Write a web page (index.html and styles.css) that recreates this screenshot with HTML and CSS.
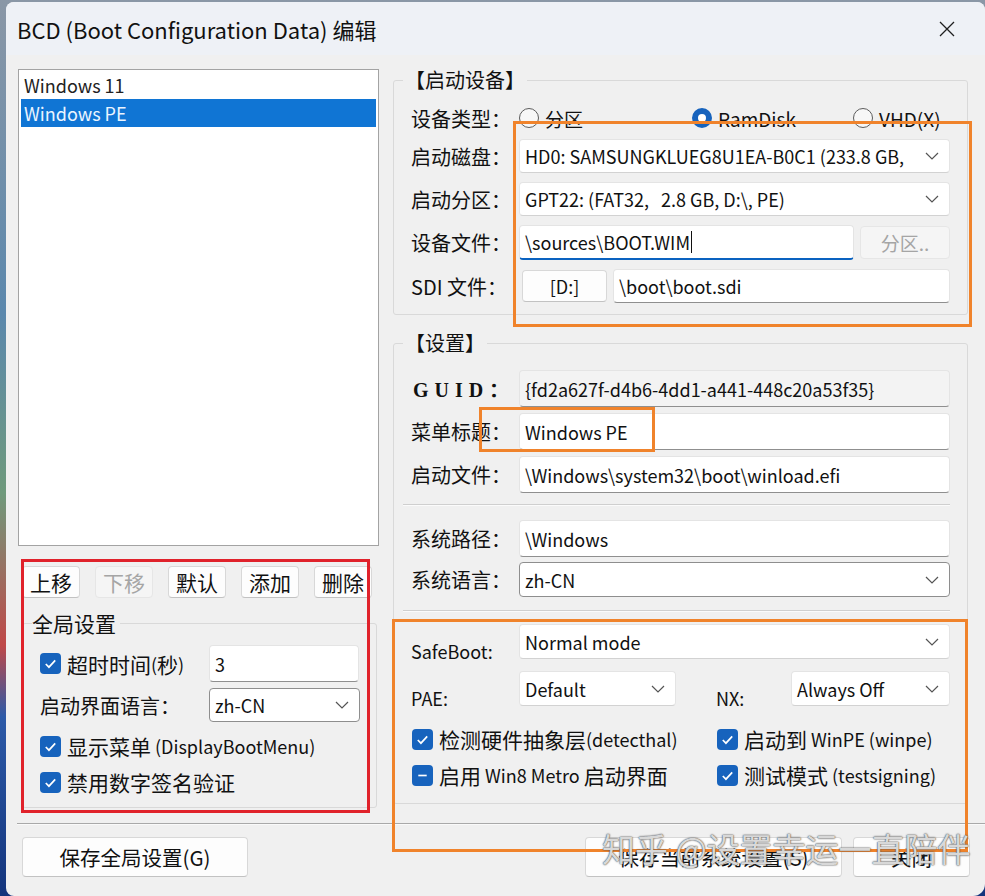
FILE: index.html
```html
<!DOCTYPE html>
<html lang="zh-CN">
<head>
    <meta charset="UTF-8">
    <title>BCD (Boot Configuration Data) 编辑</title>
    <link rel="stylesheet" href="styles.css">
</head>
<body>
    <div class="window">
        <div class="titlebar">
            <span class="title">BCD (Boot Configuration Data) 编辑</span>
            <svg class="close" width="16" height="16" viewBox="0 0 16 16"><path d="M1 1L15 15M15 1L1 15" stroke="#1f1f1f" stroke-width="1.3" fill="none"/></svg>
        </div>

        <div class="main">
            <div class="left">
                <div class="listbox">
                    <div class="list-item">Windows 11</div>
                    <div class="list-item selected">Windows PE</div>
                </div>

                <div class="toolbar">
                    <button class="btn">上移</button>
                    <button class="btn disabled">下移</button>
                    <button class="btn">默认</button>
                    <button class="btn">添加</button>
                    <button class="btn">删除</button>
                </div>

                <fieldset class="group global">
                    <legend>全局设置</legend>
                    <div class="global-grid">
                        <div class="check"><span class="cb"><svg viewBox="0 0 20 20"><path d="M5.5 10.5l3 3 6-6.5" fill="none" stroke="#fff" stroke-width="1.6"/></svg></span>超时时间<span class="latin">(</span>秒<span class="latin">)</span></div>
                        <div class="field tall">3</div>
                        <div class="lbl">启动界面语言：</div>
                        <div class="field combo edit">zh-CN<svg class="chev" width="14" height="8" viewBox="0 0 14 8"><path d="M1 1l6 6 6-6" fill="none" stroke="#555" stroke-width="1.2"/></svg></div>
                    </div>
                    <div class="check g-row"><span class="cb"><svg viewBox="0 0 20 20"><path d="M5.5 10.5l3 3 6-6.5" fill="none" stroke="#fff" stroke-width="1.6"/></svg></span>显示菜单<span class="latin">&nbsp;(DisplayBootMenu)</span></div>
                    <div class="check g-row"><span class="cb"><svg viewBox="0 0 20 20"><path d="M5.5 10.5l3 3 6-6.5" fill="none" stroke="#fff" stroke-width="1.6"/></svg></span>禁用数字签名验证</div>
                </fieldset>
            </div>

            <div class="right">
                <fieldset class="group device">
                    <legend>【启动设备】</legend>
                    <div class="row radios-row">
                        <span class="lbl">设备类型：</span>
                        <div class="radios">
                            <span class="radio"><span class="rb"></span>分区</span>
                            <span class="radio"><span class="rb on"></span>RamDisk</span>
                            <span class="radio"><span class="rb"></span>VHD(X)</span>
                        </div>
                    </div>
                    <div class="row">
                        <span class="lbl">启动磁盘：</span>
                        <div class="field combo">HD0: SAMSUNGKLUEG8U1EA-B0C1 (233.8 GB,<svg class="chev" width="14" height="8" viewBox="0 0 14 8"><path d="M1 1l6 6 6-6" fill="none" stroke="#555" stroke-width="1.2"/></svg></div>
                    </div>
                    <div class="row">
                        <span class="lbl">启动分区：</span>
                        <div class="field combo">GPT22: (FAT32,&nbsp;&nbsp; 2.8 GB, D:\, PE)<svg class="chev" width="14" height="8" viewBox="0 0 14 8"><path d="M1 1l6 6 6-6" fill="none" stroke="#555" stroke-width="1.2"/></svg></div>
                    </div>
                    <div class="row">
                        <span class="lbl">设备文件：</span>
                        <div class="field focus tall-35">\sources\BOOT.WIM<span class="caret"></span></div>
                        <button class="btn disabled part-btn">分区..</button>
                    </div>
                    <div class="row">
                        <span class="lbl">SDI 文件：</span>
                        <button class="btn drive-btn">[D:]</button>
                        <div class="field sdi">\boot\boot.sdi</div>
                    </div>
                </fieldset>

                <fieldset class="group settings">
                    <legend>【设置】</legend>
                    <div class="row">
                        <span class="lbl guid">GUID：</span>
                        <div class="field tall readonly">{fd2a627f-d4b6-4dd1-a441-448c20a53f35}</div>
                    </div>
                    <div class="row gap6">
                        <span class="lbl">菜单标题：</span>
                        <div class="field tall">Windows PE</div>
                    </div>
                    <div class="row gap6">
                        <span class="lbl">启动文件：</span>
                        <div class="field tall">\Windows\system32\boot\winload.efi</div>
                    </div>
                    <div class="divider d1"></div>
                    <div class="row gap14">
                        <span class="lbl">系统路径：</span>
                        <div class="field tall">\Windows</div>
                    </div>
                    <div class="row gap5">
                        <span class="lbl">系统语言：</span>
                        <div class="field combo edit tall-35">zh-CN<svg class="chev" width="14" height="8" viewBox="0 0 14 8"><path d="M1 1l6 6 6-6" fill="none" stroke="#555" stroke-width="1.2"/></svg></div>
                    </div>
                    <div class="divider d2"></div>
                    <div class="row gap12">
                        <span class="lbl small low">SafeBoot:</span>
                        <div class="field combo tall-35">Normal mode<svg class="chev" width="14" height="8" viewBox="0 0 14 8"><path d="M1 1l6 6 6-6" fill="none" stroke="#555" stroke-width="1.2"/></svg></div>
                    </div>
                    <div class="row gap12">
                        <span class="lbl small low">PAE:</span>
                        <div class="field combo tall-35 pae">Default<svg class="chev" width="14" height="8" viewBox="0 0 14 8"><path d="M1 1l6 6 6-6" fill="none" stroke="#555" stroke-width="1.2"/></svg></div>
                        <span class="lbl small low nx">NX:</span>
                        <div class="field combo tall-35">Always Off<svg class="chev" width="14" height="8" viewBox="0 0 14 8"><path d="M1 1l6 6 6-6" fill="none" stroke="#555" stroke-width="1.2"/></svg></div>
                    </div>
                    <div class="checks">
                        <div class="check"><span class="cb"><svg viewBox="0 0 20 20"><path d="M5.5 10.5l3 3 6-6.5" fill="none" stroke="#fff" stroke-width="1.6"/></svg></span>检测硬件抽象层<span class="latin">(detecthal)</span></div>
                        <div class="check"><span class="cb"><svg viewBox="0 0 20 20"><path d="M5.5 10.5l3 3 6-6.5" fill="none" stroke="#fff" stroke-width="1.6"/></svg></span>启动到<span class="latin">&nbsp;WinPE (winpe)</span></div>
                        <div class="check"><span class="cb"><svg viewBox="0 0 20 20"><path d="M6 10h8" fill="none" stroke="#fff" stroke-width="1.6"/></svg></span>启用<span class="latin">&nbsp;Win8 Metro&nbsp;</span>启动界面</div>
                        <div class="check"><span class="cb"><svg viewBox="0 0 20 20"><path d="M5.5 10.5l3 3 6-6.5" fill="none" stroke="#fff" stroke-width="1.6"/></svg></span>测试模式<span class="latin">&nbsp;(testsigning)</span></div>
                    </div>
                </fieldset>
            </div>
        </div>

        <div class="separator"></div>

        <div class="footer">
            <button class="btn save-global">保存全局设置(G)</button>
            <div class="footer-right">
                <button class="btn save-sys">保存当前系统设置(S)</button>
                <button class="btn close-btn">关闭</button>
            </div>
        </div>

        <div class="mark red-mark"></div>
        <div class="mark orange-mark o1"></div>
        <div class="mark orange-mark o2"></div>
        <div class="mark orange-mark o3"></div>
        <div class="watermark">知乎 @设置幸运一直陪伴</div>
    </div>
</body>
</html>
```

FILE: styles.css
```css
* {
    box-sizing: border-box;
}

body {
    margin: 0;
    width: 985px;
    height: 896px;
    overflow: hidden;
    background: linear-gradient(180deg, #8a97a6 0, #5b88ad 35%, #6f9a7c 55%, #c04848 72%, #2c5aa8 80%, #14347c 100%);
    font-family: "Noto Sans CJK SC", "Noto Sans", sans-serif;
    color: #111;
}

.window {
    position: relative;
    margin: 2px 0 0 6px;
    width: 979px;
    height: 894px;
    background: #f0f0f0;
    border-radius: 8px 8px 12px 8px;
    overflow: hidden;
}

.titlebar {
    height: 53px;
    background: #eef1f6;
    display: flex;
    align-items: center;
    justify-content: space-between;
    padding: 0 30px 0 11px;
}

.title {
    font-size: 22px;
}

.main {
    display: flex;
    gap: 14px;
    padding: 14px 0 0 12px;
}

.left {
    width: 361px;
}

.right {
    width: 575px;
}

/* list of entries */
.listbox {
    height: 477px;
    background: #fff;
    border: 1px solid #a3a3a3;
    padding: 1px 2px;
}

.list-item {
    height: 28px;
    line-height: 28px;
    padding-left: 3px;
    font-size: 18px;
    color: #222;
}

.list-item.selected {
    background: #1075d4;
    color: #eaf4ff;
}

/* buttons */
.btn {
    height: 32px;
    background: #fdfdfd;
    border: 1px solid #d8d8d8;
    border-bottom-color: #c2c2c2;
    border-radius: 4px;
    font-family: inherit;
    font-size: 19px;
    color: #111;
    padding: 0;
}

.btn.disabled {
    background: #f5f5f5;
    border-color: #e6e6e6;
    color: #a5a5a5;
}

.toolbar {
    display: flex;
    gap: 15px;
    margin-top: 20px;
    padding-left: 4px;
}

.toolbar .btn {
    width: 58px;
    font-size: 21px;
}

/* group boxes */
.group {
    margin: 0;
    border: 1px solid #d9d9d9;
    border-radius: 3px;
    min-width: 0;
}

.group legend {
    font-size: 20px;
    line-height: 22px;
    padding: 0 2px;
}

.global {
    margin: 14px 0 0 4px;
    width: 355px;
    padding: 11px 0 13px 9px;
}

.global legend {
    font-size: 21px;
    padding: 0 4px 0 0;
}

.global-grid {
    display: grid;
    grid-template-columns: 169px 150px;
    row-gap: 6px;
    align-items: center;
    padding-left: 8px;
}

.global-grid .combo {
    width: 151px;
    height: 34px;
}

.g-row {
    margin-top: 12px;
    padding-left: 8px;
}

.check {
    display: flex;
    align-items: center;
    height: 24px;
    font-size: 21px;
    white-space: nowrap;
}

.latin {
    font-size: 18px;
}

.cb {
    width: 21px;
    height: 21px;
    border-radius: 4px;
    background: #1763bd;
    margin-right: 6px;
    flex-shrink: 0;
}

.cb svg {
    width: 21px;
    height: 21px;
    display: block;
}

.lbl {
    font-size: 20px;
    white-space: nowrap;
}

/* form rows */
.device {
    padding: 15px 17px 11px 9px;
}

.settings {
    margin-top: 17px;
    padding: 16px 17px 16px 9px;
}

.row {
    display: flex;
    align-items: center;
    padding-left: 8px;
    margin-top: 9px;
}

.device .row:first-of-type,
.settings .row:first-of-type {
    margin-top: 0;
}

.row > .lbl {
    width: 108px;
    flex-shrink: 0;
}

.row .field {
    flex: 1;
}

.gap5 { margin-top: 5px; }
.gap6 { margin-top: 6px; }
.gap12 { margin-top: 12px; }
.gap14 { margin-top: 14px; }

.radios-row {
    height: 24px;
}

.radios {
    display: grid;
    grid-template-columns: 173px 161px auto;
    font-size: 19px;
}

.radio {
    display: flex;
    align-items: center;
    gap: 6px;
}

.rb {
    width: 20px;
    height: 20px;
    border-radius: 50%;
    border: 1px solid #5c5c5c;
    background: #f7f7f7;
}

.rb.on {
    border: 6px solid #1763bd;
    background: #fff;
}

.field {
    height: 34px;
    background: #fff;
    border: 1px solid #e4e4e4;
    border-bottom-color: #8f8f8f;
    border-radius: 4px;
    font-size: 18px;
    padding: 0 5px;
    display: flex;
    align-items: center;
    white-space: nowrap;
    overflow: hidden;
}

.field.tall {
    height: 37px;
}

.field.tall-35 {
    height: 35px;
}

.field.readonly {
    background: #f3f3f3;
}

.field.focus {
    border-bottom: 2px solid #0a62c0;
}

.caret {
    width: 1px;
    height: 22px;
    background: #111;
    margin-left: 1px;
}

.combo {
    justify-content: space-between;
    padding-right: 10px;
    border-bottom-color: #d2d2d2;
}

.combo.edit {
    border-color: #8e8e8e;
}

.chev {
    flex-shrink: 0;
}

.part-btn {
    width: 90px;
    height: 33px;
    margin-left: 6px;
}

.drive-btn {
    width: 85px;
    margin-left: 3px;
    font-size: 18px;
}

.row .field.sdi {
    margin-left: 6px;
}

.guid {
    font-family: "Liberation Serif", serif;
    font-weight: bold;
    font-size: 20px;
    letter-spacing: 6px;
    padding-left: 2px;
}

.divider {
    height: 2px;
    border-top: 1px solid #cfcfcf;
    border-bottom: 1px solid #fbfbfb;
}

.d1 {
    margin-top: 11px;
}

.d2 {
    margin-top: 13px;
}

.small {
    font-size: 18px;
}

.low {
    align-self: flex-end;
    margin-bottom: -5px;
}

.row .pae {
    flex: 0 0 157px;
}

.row > .nx {
    width: 75px;
    margin-left: 40px;
}

.checks {
    display: grid;
    grid-template-columns: 305px auto;
    row-gap: 12px;
    margin-top: 21px;
    padding-left: 9px;
}

/* bottom */
.separator {
    margin: 15px 0 0 11px;
    height: 2px;
    border-top: 1px solid #a9a9a9;
    border-bottom: 1px solid #fafafa;
}

.footer {
    display: flex;
    justify-content: space-between;
    margin-top: 12px;
    padding: 0 15px 0 16px;
}

.footer .btn {
    height: 40px;
    font-size: 20.5px;
}

.save-global {
    width: 226px;
}

.footer-right {
    display: flex;
    gap: 11px;
}

.save-sys {
    width: 257px;
}

.close-btn {
    width: 117px;
}

/* annotations drawn over the dialog */
.mark {
    position: absolute;
    border: 3px solid #f0832b;
}

.red-mark {
    left: 15px;
    top: 557px;
    width: 349px;
    height: 254px;
    border-color: #e0222b;
}

.o1 {
    left: 507px;
    top: 119px;
    width: 459px;
    height: 206px;
}

.o2 {
    left: 473px;
    top: 405px;
    width: 176px;
    height: 45px;
}

.o3 {
    left: 386px;
    top: 617px;
    width: 576px;
    height: 233px;
}

.watermark {
    position: absolute;
    left: 596px;
    top: 824px;
    font-size: 33px;
    line-height: 44px;
    color: rgba(255, 255, 255, 0.8);
    text-shadow: 0 0 2px #555, 0 0 1px #333;
    white-space: nowrap;
}
```
